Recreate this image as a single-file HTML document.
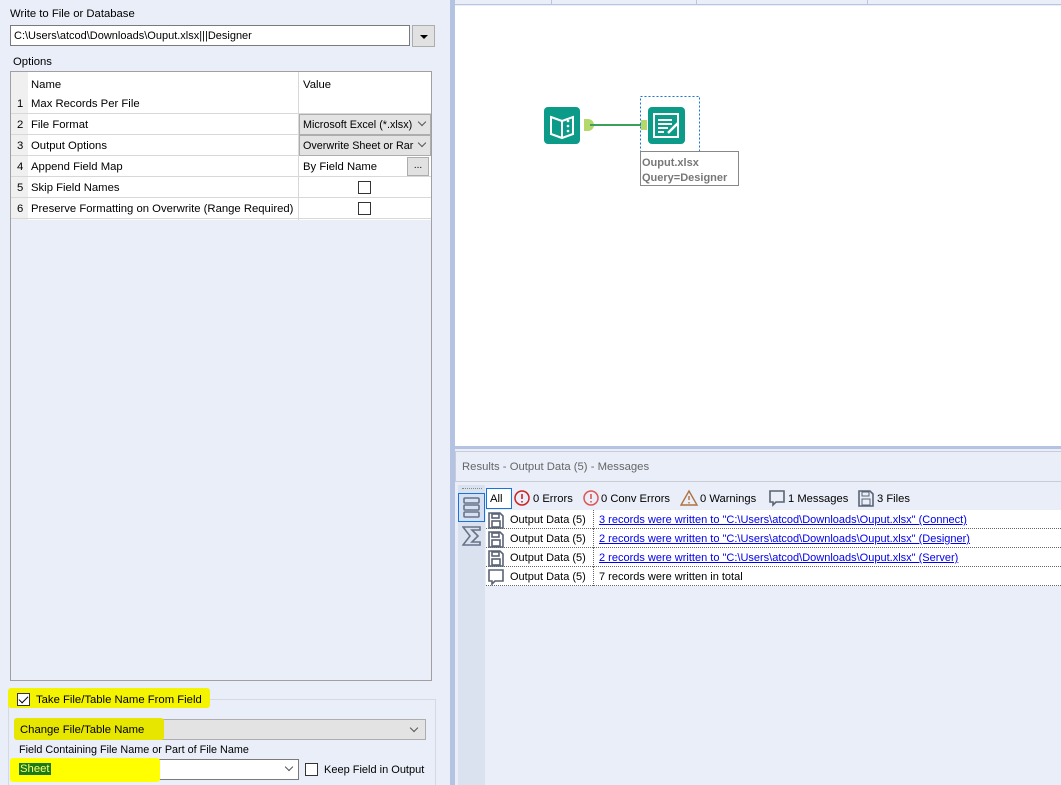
<!DOCTYPE html>
<html><head><style>
*{box-sizing:border-box;margin:0;padding:0}
body{width:1061px;height:785px;position:relative;overflow:hidden;background:#e9eef8;font-family:"Liberation Sans",sans-serif;font-size:11.3px;color:#000}
.a{position:absolute}
.hl{position:absolute;background:#f4f400;border-radius:3px}
.cb{position:absolute;width:13px;height:13px;border:1px solid #333;background:#fff}
.row{position:absolute;left:0;width:420px;height:21px;border-bottom:1px solid #d8d8d8}
.row span{position:absolute;top:5px}
.dd{position:absolute;background:#e3e3e3;border:1px solid #adadad}
.chev{position:absolute;width:6px;height:6px;border-right:1px solid #555;border-bottom:1px solid #555;transform:rotate(45deg)}
.mr{position:absolute;left:486px;width:575px;height:19px;border-bottom:1px dotted #666;background:#fff;font-size:11px}
.mr .t{position:absolute;left:24px;top:4px}
.mr .m{position:absolute;left:107px;top:0;height:19px;border-left:1px dotted #666;padding:4px 0 0 5px}
.mr a{color:#00e;text-decoration:underline}
</style></head><body>
<div class="a" style="left:10px;top:8px">Write to File or Database</div>
<div class="a" style="left:10px;top:25px;width:400px;height:21px;background:#fff;border:1px solid #7a7a7a;padding:4px 3px;font-size:11px">C:\Users\atcod\Downloads\Ouput.xlsx|||Designer</div>
<div class="a" style="left:412px;top:25px;width:23px;height:22px;background:#e1e1e1;border:1px solid #adadad"><div class="a" style="left:7px;top:9px;border-left:4px solid transparent;border-right:4px solid transparent;border-top:4px solid #000"></div></div>
<div class="a" style="left:13px;top:56px">Options</div>
<div class="a" style="left:10px;top:71px;width:422px;height:610px;border:1px solid #a0a0a0;background:#e9eef8">
 <div class="a" style="left:0;top:0;width:420px;height:148px;background:#fff"></div>
 <div class="a" style="left:0;top:0;width:17px;height:148px;background:#f0f0f0"></div>
 <div class="a" style="left:287px;top:0;width:1px;height:148px;background:#d8d8d8"></div>
 <div class="row" style="top:0;border:none"><span style="left:20px;top:7px">Name</span><span style="left:292px;top:7px">Value</span></div>
 <div class="row" style="top:21px"><span style="left:6px">1</span><span style="left:20px">Max Records Per File</span></div>
 <div class="row" style="top:42px"><span style="left:6px">2</span><span style="left:20px">File Format</span><div class="dd" style="left:288px;top:0;width:132px;height:21px;padding:4px 3px;font-size:10.8px">Microsoft Excel (*.xlsx)<div class="chev" style="left:119px;top:4px"></div></div></div>
 <div class="row" style="top:63px"><span style="left:6px">3</span><span style="left:20px">Output Options</span><div class="dd" style="left:288px;top:0;width:132px;height:21px;padding:4px 3px;font-size:10.8px;overflow:hidden;white-space:nowrap"><span style="position:static;display:inline-block;width:112px;overflow:hidden">Overwrite Sheet or Rar</span><div class="chev" style="left:119px;top:4px"></div></div></div>
 <div class="row" style="top:84px"><span style="left:6px">4</span><span style="left:20px">Append Field Map</span><span style="left:292px">By Field Name</span><div class="a" style="left:396px;top:1px;width:22px;height:19px;background:#e1e1e1;border:1px solid #adadad;text-align:center;font-size:10px;line-height:16px">...</div></div>
 <div class="row" style="top:105px"><span style="left:6px">5</span><span style="left:20px">Skip Field Names</span><div class="cb" style="left:347px;top:4px"></div></div>
 <div class="row" style="top:126px"><span style="left:6px">6</span><span style="left:20px">Preserve Formatting on Overwrite (Range Required)</span><div class="cb" style="left:347px;top:4px"></div></div>
</div>
<div class="a" style="left:8px;top:699px;width:428px;height:86px;border:1px solid #d5d9e0;border-bottom:none"></div>
<div class="hl" style="left:8px;top:688px;width:202px;height:20px"></div>
<div class="cb" style="left:17px;top:693px;border-color:#333"><div class="a" style="left:3px;top:0px;width:5px;height:9px;border-right:1.5px solid #000;border-bottom:1.5px solid #000;transform:rotate(45deg)"></div></div>
<div class="a" style="left:36px;top:694px">Take File/Table Name From Field</div>
<div class="dd" style="left:16px;top:719px;width:410px;height:21px"></div>
<div class="hl" style="left:14px;top:718px;width:150px;height:22px;background:#e6e600"></div>
<div class="a" style="left:20px;top:724px">Change File/Table Name</div>
<div class="chev" style="left:411px;top:725px"></div>
<div class="a" style="left:19px;top:744px;font-size:10.8px">Field Containing File Name or Part of File Name</div>
<div class="a" style="left:16px;top:759px;width:283px;height:21px;background:#fff;border:1px solid #7a7a7a"></div>
<div class="hl" style="left:10px;top:758px;width:150px;height:24px;background:#ffff00"></div>
<div class="a" style="left:19px;top:763px;background:#1a7a1a;color:#ffff66;padding:0 1px">Sheet</div>
<div class="chev" style="left:286px;top:764px"></div>
<div class="cb" style="left:305px;top:763px"></div>
<div class="a" style="left:324px;top:764px;font-size:11px">Keep Field in Output</div>
<div class="a" style="left:450px;top:0;width:5px;height:785px;background:#b4c3e2"></div>
<div class="a" style="left:455px;top:0;width:606px;height:5px;background:#e9eef8;border-bottom:1px solid #b9c6e0"></div>
<div class="a" style="left:551px;top:0;width:1px;height:5px;background:#b9c6e0"></div>
<div class="a" style="left:696px;top:0;width:1px;height:5px;background:#b9c6e0"></div>
<div class="a" style="left:867px;top:0;width:1px;height:5px;background:#b9c6e0"></div>
<div class="a" style="left:455px;top:6px;width:606px;height:440px;background:#fff"></div>
<svg class="a" style="left:540px;top:95px" width="210" height="95">
 <rect x="4" y="12" width="36" height="37" rx="4" fill="#0b9b88"/>
 <path d="M11 22 l11 4 11 -4 v17 l-11 4 -11 -4z" fill="none" stroke="#fff" stroke-width="2"/>
 <line x1="22" y1="26" x2="22" y2="43" stroke="#fff" stroke-width="2"/>
 <circle cx="28" cy="26" r="1.3" fill="#fff"/><circle cx="28" cy="31" r="1.3" fill="#fff"/><circle cx="28" cy="36" r="1.3" fill="#fff"/>
 <path d="M44 24 h4 a6 6 0 0 1 0 12 h-4z" fill="#b4d86a"/>
 <line x1="50" y1="30" x2="103" y2="30" stroke="#3ca05a" stroke-width="2"/>
 <rect x="101" y="25" width="6" height="10" fill="#b4d86a"/>
 <rect x="100.5" y="1.5" width="59" height="55" fill="none" stroke="#1a73d9" stroke-dasharray="2,2"/>
 <rect x="108" y="12" width="37" height="37" rx="4" fill="#0b9b88"/>
 <rect x="114" y="19" width="24" height="23" fill="none" stroke="#fff" stroke-width="2"/>
 <path d="M118 25h14M118 29h14M118 33h10M118 37h6" stroke="#fff" stroke-width="2"/>
 <path d="M128 38 l10 -10" stroke="#fff" stroke-width="2.5"/>
 <rect x="100.5" y="56.5" width="98" height="34" fill="#fff" stroke="#888"/>
 <text x="102" y="71" font-family="Liberation Sans" font-size="11" font-weight="bold" fill="#777">Ouput.xlsx</text>
 <text x="102" y="86" font-family="Liberation Sans" font-size="11" font-weight="bold" fill="#777">Query=Designer</text>
</svg>
<div class="a" style="left:455px;top:446px;width:606px;height:3px;background:#b4c3e2"></div>
<div class="a" style="left:455px;top:451px;width:606px;height:31px;border:1px solid #c8ccd4;border-right:none;background:#e9eef8;color:#666;padding:9px 6px">Results - Output Data (5) - Messages</div>
<div class="a" style="left:458px;top:485px;width:27px;height:300px;background:#dbe2ef"></div>
<div class="a" style="left:462px;top:488px;width:20px;border-top:1px dotted #888"></div>
<div class="a" style="left:458px;top:493px;width:27px;height:29px;border:1px solid #1a73d9;background:#d5e1f2"></div>
<svg class="a" style="left:462px;top:496px" width="20" height="60"><g fill="none" stroke="#687389" stroke-width="1.6"><rect x="2" y="2" width="15" height="5" rx="1"/><rect x="2" y="9" width="15" height="5" rx="1"/><rect x="2" y="16" width="15" height="5" rx="1"/><path d="M1 31h17v3l-8 0 6 6-6 6h8v3H1l7-9z"/></g></svg>
<div class="a" style="left:486px;top:488px;width:26px;height:21px;border:1px solid #1a73d9;background:#fff;padding:4px 3px">All</div>
<svg class="a" style="left:514px;top:489px" width="420" height="18" font-family="Liberation Sans" font-size="11.2">
 <circle cx="8" cy="9" r="7" fill="none" stroke="#c22" stroke-width="1.5"/><path d="M8 5v5M8 12v1.5" stroke="#c22" stroke-width="1.6"/>
 <text x="19" y="13">0 Errors</text>
 <circle cx="77" cy="9" r="7" fill="none" stroke="#d55" stroke-width="1.5"/><path d="M77 5v5M77 12v1.5" stroke="#d55" stroke-width="1.6"/>
 <text x="87" y="13">0 Conv Errors</text>
 <path d="M175 2l8 14h-16z" fill="none" stroke="#b07040" stroke-width="1.4"/><path d="M175 7v4M175 13v1.5" stroke="#b07040" stroke-width="1.4"/>
 <text x="186" y="13">0 Warnings</text>
 <path d="M256 2h14v11h-8l-3 3v-3h-3z" fill="none" stroke="#5a6476" stroke-width="1.6"/>
 <text x="274" y="13">1 Messages</text>
 <path d="M345 2h11l3 3v12h-14z" fill="none" stroke="#5a6476" stroke-width="1.6"/><rect x="348" y="3" width="7" height="4" fill="none" stroke="#5a6476"/><rect x="348" y="10" width="8" height="6" fill="none" stroke="#5a6476"/>
 <text x="363" y="13">3 Files</text>
</svg>
<div class="mr" style="top:510px"><div class="t">Output Data (5)</div><div class="m"><a>3 records were written to "C:\Users\atcod\Downloads\Ouput.xlsx" (Connect)</a></div></div>
<div class="mr" style="top:529px"><div class="t">Output Data (5)</div><div class="m"><a>2 records were written to "C:\Users\atcod\Downloads\Ouput.xlsx" (Designer)</a></div></div>
<div class="mr" style="top:548px"><div class="t">Output Data (5)</div><div class="m"><a>2 records were written to "C:\Users\atcod\Downloads\Ouput.xlsx" (Server)</a></div></div>
<div class="mr" style="top:567px"><div class="t">Output Data (5)</div><div class="m">7 records were written in total</div></div>
<svg class="a" style="left:486px;top:510px" width="22" height="76"><g fill="none" stroke="#5a6476" stroke-width="1.6"><path d="M3 3h11l3 3v12H3z"/><rect x="6" y="4" width="7" height="4"/><rect x="6" y="11" width="8" height="6"/><path d="M3 22h11l3 3v12H3z"/><rect x="6" y="23" width="7" height="4"/><rect x="6" y="30" width="8" height="6"/><path d="M3 41h11l3 3v12H3z"/><rect x="6" y="42" width="7" height="4"/><rect x="6" y="49" width="8" height="6"/><path d="M3 60h14v11h-8l-3 3v-3H3z"/></g></svg>
</body></html>
